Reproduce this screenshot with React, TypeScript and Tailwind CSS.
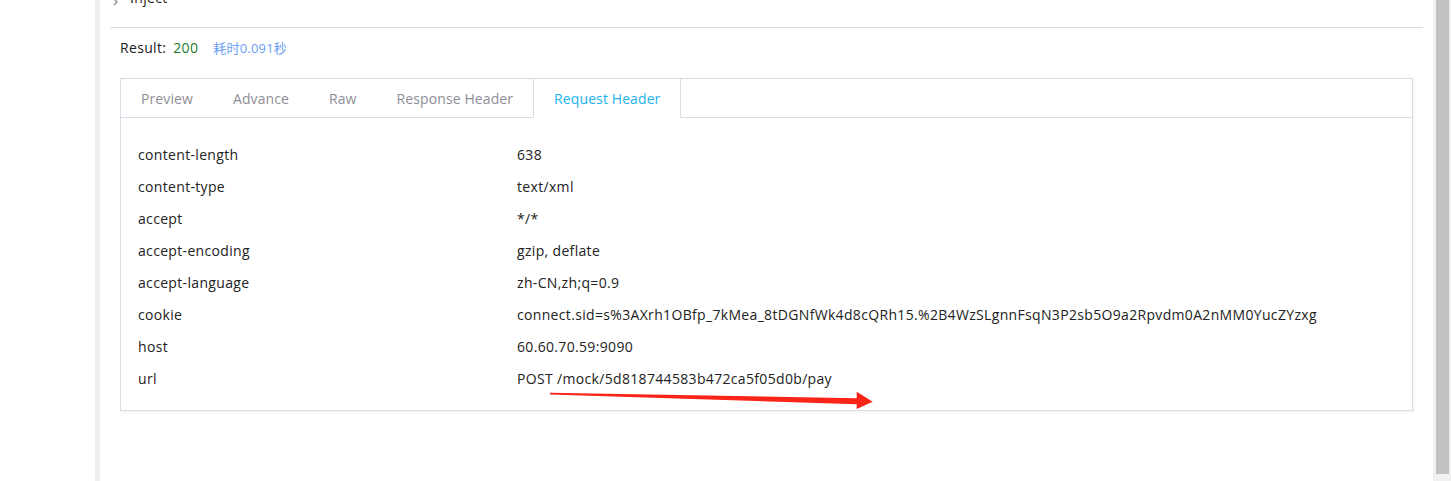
import React from "react";

const rows: [string, string][] = [
  ["content-length", "638"],
  ["content-type", "text/xml"],
  ["accept", "*/*"],
  ["accept-encoding", "gzip, deflate"],
  ["accept-language", "zh-CN,zh;q=0.9"],
  ["cookie", "connect.sid=s%3AXrh1OBfp_7kMea_8tDGNfWk4d8cQRh15.%2B4WzSLgnnFsqN3P2sb5O9a2Rpvdm0A2nMM0YucZYzxg"],
  ["host", "60.60.70.59:9090"],
  ["url", "POST /mock/5d818744583b472ca5f05d0b/pay"],
];

const tabs = ["Preview", "Advance", "Raw", "Response Header"];

export default function App() {
  return (
    <div
      className="relative flex h-[481px] w-full overflow-hidden bg-white text-[14px] tracking-[0.33px] text-[#222]"
      style={{ fontFamily: '"Open Sans", "Noto Sans CJK SC", sans-serif' }}
    >
      <div className="w-[95px] shrink-0 bg-white" />
      <div className="w-[5px] shrink-0 bg-[#efeef2]" />
      <div className="flex min-w-0 flex-1 flex-col px-[10px]">
        <div className="-mt-[12px] flex h-[40px] shrink-0 items-start border-b border-[#dcdcdf] pl-[3px] pt-0">
          <svg width="6" height="20" viewBox="0 0 6 20" className="mt-0 text-[#888]">
            <path d="M1 11 L4 14 L1 17" fill="none" stroke="currentColor" strokeWidth="1.2" />
          </svg>
          <span className="ml-[11px] leading-[20px]">Inject</span>
        </div>
        <div className="mt-[10px] flex h-[20px] items-center pl-[10px] leading-[20px]">
          <span>Result:</span>
          <span className="ml-[7px] text-[#1f7a2e]">200</span>
          <span className="ml-[15px] text-[13px] tracking-[0.2px] text-[#6b9ef5]">耗时0.091秒</span>
        </div>
        <div className="mx-[10px] mt-[20px] border border-[#dcdce6] bg-white shadow-[1px_1px_3px_rgba(0,0,0,0.06)]">
          <div className="flex h-[39px] border-b border-[#dcdce6] tracking-[0.1px]">
            {tabs.map((t) => (
              <div key={t} className="flex h-[38px] items-center px-[20px] text-[#8e8e96]">
                {t}
              </div>
            ))}
            <div className="-mb-px flex h-[39px] items-center border-x border-[#dcdce6] bg-white px-[20px] text-[#22b3ec]">
              Request Header
            </div>
          </div>
          <div className="pb-[16px] pl-[17px] pt-[20px]">
            {rows.map(([k, v]) => (
              <div key={k} className="flex h-[32px] items-center">
                <div className="w-[379px] shrink-0">{k}</div>
                <div className="whitespace-nowrap">{v}</div>
              </div>
            ))}
          </div>
        </div>
      </div>
      <div className="flex w-[18px] shrink-0 justify-center bg-[#f1f1f1]">
        <div className="h-[474px] w-[13px] bg-[#c1c1c1]" />
      </div>
      <svg
        className="pointer-events-none absolute left-[540px] top-[385px]"
        width="340"
        height="30"
        viewBox="0 0 340 30"
      >
        <polygon
          points="10,7.7 316.7,13.3 316.7,6.7 332.7,16.7 316.7,24 316.7,19.3 10,9.5"
          fill="#fa2418"
        />
      </svg>
    </div>
  );
}
